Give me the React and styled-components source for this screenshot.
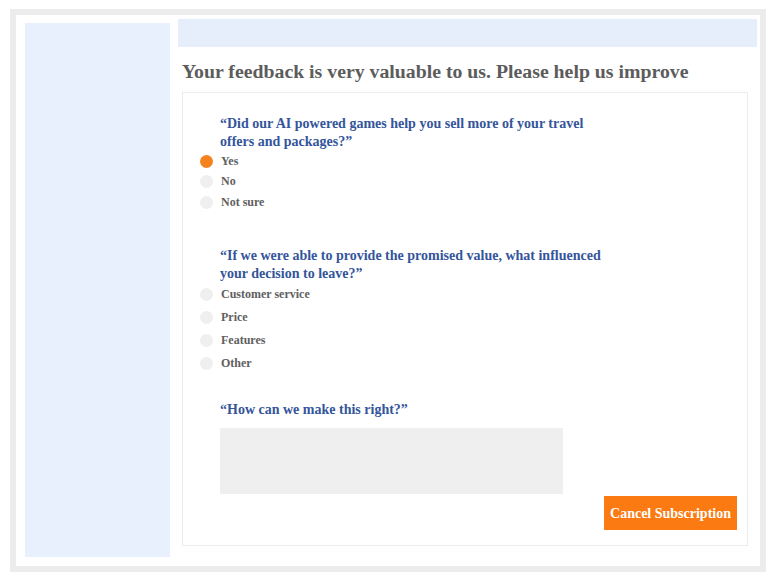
import { styled, createGlobalStyle } from "styled-components";

const questions = [
  {
    text: "“Did our AI powered games help you sell more of your travel offers and packages?”",
    options: ["Yes", "No", "Not sure"],
    selected: "Yes",
    row: 20.5,
  },
  {
    text: "“If we were able to provide the promised value, what influenced your decision to leave?”",
    options: ["Customer service", "Price", "Features", "Other"],
    selected: null,
    row: 23,
  },
];

const App = () => {
  return (
    <>
      <GlobalStyle />
      <Frame>
        <Sidebar />
        <Main>
          <TopBar />
          <Title>Your feedback is very valuable to us. Please help us improve</Title>
          <Card>
            {questions.map((q, i) => (
              <Question key={i}>
                <QuestionText>{q.text}</QuestionText>
                <Options>
                  {q.options.map((opt) => (
                    <Option key={opt} $row={q.row}>
                      <Radio $checked={opt === q.selected} />
                      <OptionLabel>{opt}</OptionLabel>
                    </Option>
                  ))}
                </Options>
              </Question>
            ))}
            <QuestionText>“How can we make this right?”</QuestionText>
            <Comment />
            <Actions>
              <CancelButton>Cancel Subscription</CancelButton>
            </Actions>
          </Card>
        </Main>
      </Frame>
    </>
  );
};

const GlobalStyle = createGlobalStyle`
  body {
    margin: 0;
    background: #ffffff;
    font-family: "Liberation Serif", "Times New Roman", serif;
  }
`;

const Frame = styled.div`
  box-sizing: border-box;
  width: 756px;
  height: 563px;
  margin: 9px 0 0 10px;
  border: 6px solid #ececec;
  padding: 4px 3px 9px 9px;
  display: flex;
`;

const Sidebar = styled.div`
  width: 145px;
  margin-top: 4px;
  background: #e8effd;
  flex-shrink: 0;
`;

const Main = styled.div`
  flex: 1;
  margin-left: 8px;
  display: flex;
  flex-direction: column;
`;

const TopBar = styled.div`
  height: 28px;
  background: #e6eefc;
`;

const Title = styled.h1`
  margin: 12px 0 0 4px;
  font-size: 19.8px;
  line-height: 24px;
  font-weight: 700;
  color: #5c5c5c;
`;

const Card = styled.div`
  margin: 9px 9px 0 4px;
  border: 1px solid #ececec;
  padding: 22px 10px 15px 37px;
  display: flex;
  flex-direction: column;
  align-items: flex-start;
`;

const Question = styled.div`
  margin-bottom: 34px;

  & + & {
    margin-bottom: 26px;
  }
`;

const QuestionText = styled.div`
  max-width: 390px;
  font-size: 14px;
  line-height: 18px;
  font-weight: 700;
  color: #34559b;
`;

const Options = styled.div`
  display: flex;
  flex-direction: column;
  margin-left: -20px;
`;

const Option = styled.div`
  display: flex;
  align-items: center;
  height: ${(p) => p.$row}px;
`;

const Radio = styled.span`
  width: 13px;
  height: 13px;
  border-radius: 50%;
  background: ${(p) => (p.$checked ? "#f5821f" : "#efefef")};
  margin-right: 8px;
  flex-shrink: 0;
`;

const OptionLabel = styled.span`
  font-size: 12px;
  font-weight: 700;
  color: #606060;
`;

const Comment = styled.textarea`
  width: 343px;
  height: 66px;
  margin-top: 9px;
  border: none;
  padding: 0;
  background: #efefef;
  resize: none;
  outline: none;
`;

const Actions = styled.div`
  align-self: stretch;
  display: flex;
  justify-content: flex-end;
  margin-top: 2px;
`;

const CancelButton = styled.button`
  width: 133px;
  height: 34px;
  border: none;
  background: #fb7a12;
  color: #ffffff;
  font-family: "Liberation Serif", "Times New Roman", serif;
  font-size: 14px;
  font-weight: 700;
  padding: 3px 0 0;
`;

export default App;
